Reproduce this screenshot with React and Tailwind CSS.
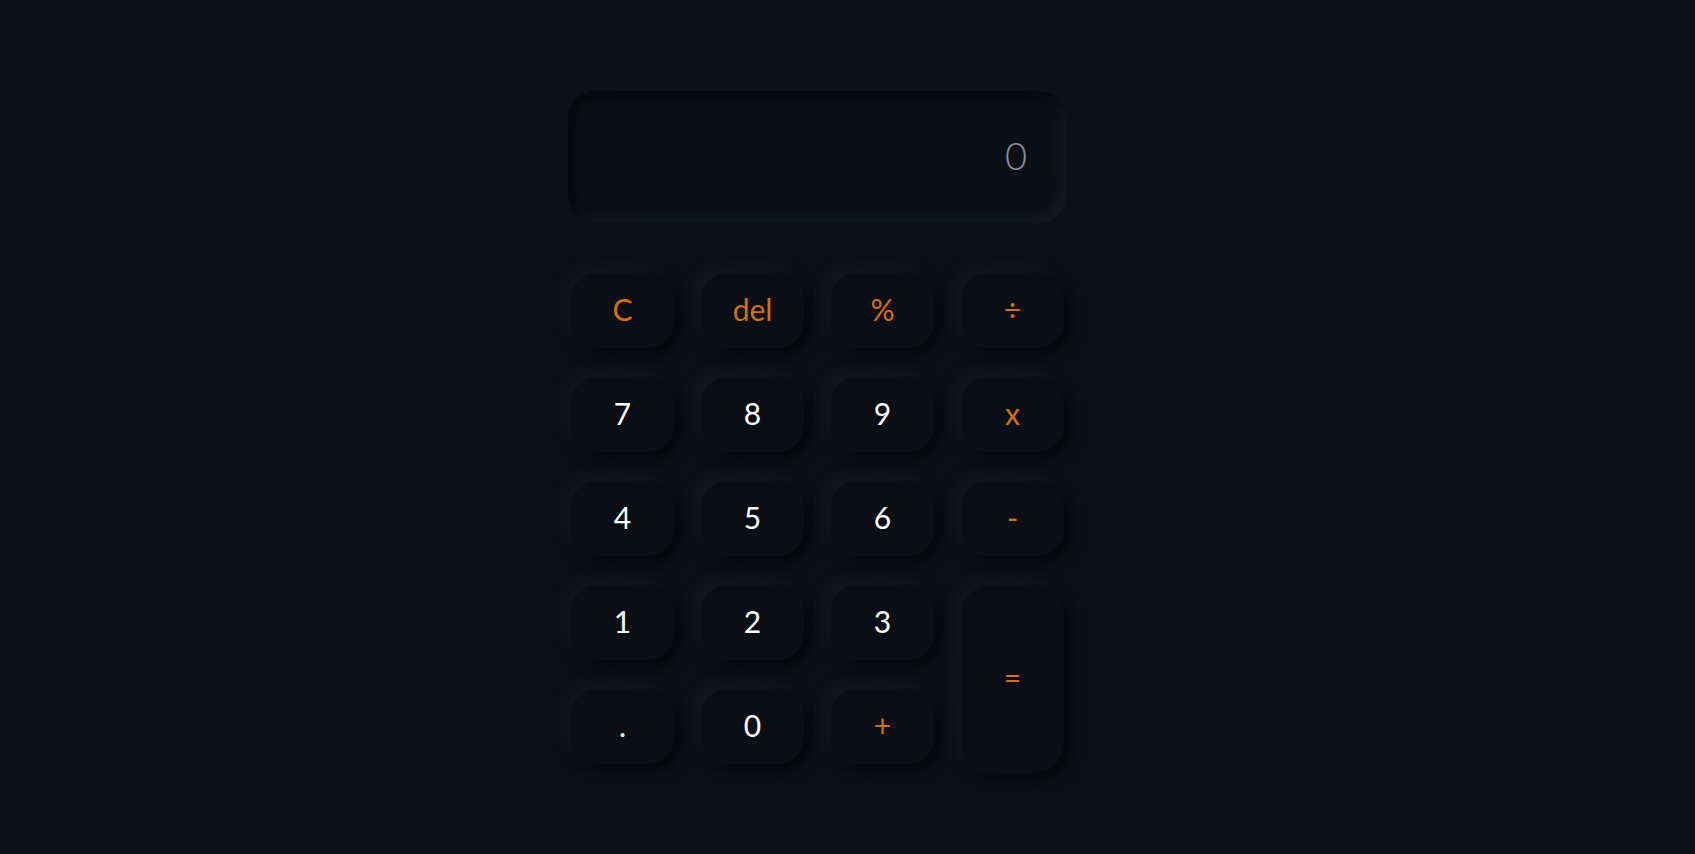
import React from 'react'

const KEYS = [
  { label: 'C', op: true },
  { label: 'del', op: true },
  { label: '%', op: true },
  { label: '÷', op: true },
  { label: '7' },
  { label: '8' },
  { label: '9' },
  { label: 'x', op: true },
  { label: '4' },
  { label: '5' },
  { label: '6' },
  { label: '-', op: true },
  { label: '1' },
  { label: '2' },
  { label: '3' },
  { label: '=', op: true, tall: true },
  { label: '.' },
  { label: '0' },
  { label: '+', op: true },
]

function Key({ k }) {
  return (
    <button
      className={`flex items-center justify-center pb-[4px] bg-[#0b0e14] text-[30px] leading-none shadow-[7px_7px_14px_#06080b,-6px_-6px_14px_#131821] ${
        k.tall ? 'row-span-2 h-[188px] rounded-[30px] self-start' : 'h-[75px] rounded-[26px]'
      } ${k.op ? 'text-[#d4720a]' : 'text-white'}`}
    >
      {k.label}
    </button>
  )
}

export default function App() {
  return (
    <div className="min-h-[854px] w-full bg-[#0d1017] pt-[91px] pl-[568px]" style={{ fontFamily: 'Lato, "Noto Sans", sans-serif' }}>
      <div className="w-[499px]">
        <div className="h-[132px] rounded-[28px] bg-[#0c0f15] shadow-[inset_7px_7px_12px_#07090c,inset_-6px_-6px_12px_#141922] flex items-center justify-end pr-[40px] pb-[4px]">
          <span className="text-[38px] font-light text-[#8a9099] leading-none">0</span>
        </div>
        <div className="mt-[50px] grid grid-cols-[repeat(4,103px)] auto-rows-[75px] gap-x-[27px] gap-y-[29px] pl-[3px]">
          {KEYS.map((k) => (
            <Key key={k.label} k={k} />
          ))}
        </div>
      </div>
    </div>
  )
}
